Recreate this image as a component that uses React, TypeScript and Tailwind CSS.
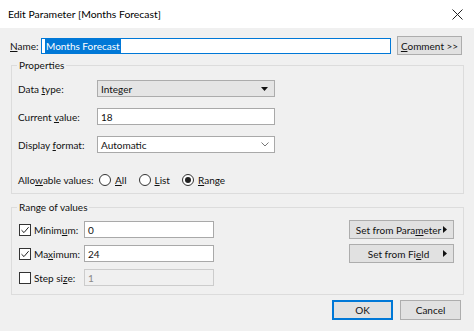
import React from 'react';

function U({ children }: { children: React.ReactNode }) {
  return <span className="underline underline-offset-[1px]">{children}</span>;
}

function Radio({ checked, children }: { checked?: boolean; children: React.ReactNode }) {
  return (
    <span className="flex items-center gap-[4px]">
      <span className="w-[12px] h-[12px] rounded-full border border-[#333333] bg-white flex items-center justify-center">
        {checked && <span className="w-[6px] h-[6px] rounded-full bg-[#222222]" />}
      </span>
      <span>{children}</span>
    </span>
  );
}

function Check({ checked }: { checked?: boolean }) {
  return (
    <span className="w-[12px] h-[12px] border border-[#333333] bg-white flex items-center justify-center shrink-0">
      {checked && (
        <svg width="10" height="10" viewBox="0 0 10 10">
          <path d="M1.5 5.2 L4 7.6 L8.6 2.2" fill="none" stroke="#222" strokeWidth="1" />
        </svg>
      )}
    </span>
  );
}

function Arrow() {
  return (
    <svg width="4" height="7" viewBox="0 0 4 7">
      <path d="M0 0 L4 3.5 L0 7 Z" fill="#111" />
    </svg>
  );
}

export default function App() {
  return (
    <div className="w-[474px] h-[331px] bg-[#f0f0f0] overflow-hidden whitespace-nowrap text-[10px] leading-[14px] text-[#111] font-['Lato',sans-serif]">
      <div className="h-[28px] bg-white flex items-center justify-between pl-[8px] pr-[11px]">
        <span className="text-[10.4px] text-black">Edit Parameter [Months Forecast]</span>
        <svg width="11" height="11" viewBox="0 0 11 11">
          <path d="M0.5 0.5 L10.5 10.5 M10.5 0.5 L0.5 10.5" stroke="#222" strokeWidth="1" />
        </svg>
      </div>

      <div className="flex items-center h-[19px] mt-[8px] pl-[10px]">
        <span className="w-[31px]"><U>N</U>ame:</span>
        <div className="w-[350px] h-[16px] border border-[#0078d7] bg-white flex items-center pl-[3px]">
          <span className="bg-[#0078d7] text-white px-[1px]">Months Forecast</span>
        </div>
        <button className="ml-[6px] w-[65px] h-[19px] bg-[#e1e1e1] border border-[#adadad] flex items-center justify-center">
          <span><U>C</U>omment &gt;&gt;</span>
        </button>
      </div>

      <fieldset className="mt-[3px] ml-[11px] w-[453px] border border-[#dcdcdc] px-[6px] pb-[5px]">
        <legend className="px-[2px] -ml-[1px]">Properties</legend>
        <div className="flex items-center mt-[8px]">
          <span className="w-[79px]">Data <U>t</U>ype:</span>
          <div className="w-[178px] h-[17px] bg-[#e5e5e5] border border-[#acacac] flex items-center justify-between pl-[3px] pr-[6px]">
            <span>Integer</span>
            <svg width="7" height="4" viewBox="0 0 7 4">
              <path d="M0 0 L7 0 L3.5 4 Z" fill="#111" />
            </svg>
          </div>
        </div>
        <div className="flex items-center mt-[11px]">
          <span className="w-[79px]">Current <U>v</U>alue:</span>
          <div className="w-[178px] h-[17px] bg-white border border-[#a9a9a9] flex items-center pl-[3px]">18</div>
        </div>
        <div className="flex items-center mt-[11px]">
          <span className="w-[79px]">Display <U>f</U>ormat:</span>
          <div className="w-[178px] h-[17px] bg-white border border-[#a9a9a9] flex items-center justify-between pl-[3px] pr-[5px]">
            <span>Automatic</span>
            <svg width="8" height="5" viewBox="0 0 8 5">
              <path d="M0.5 0.5 L4 4 L7.5 0.5" fill="none" stroke="#777" strokeWidth="1" />
            </svg>
          </div>
        </div>
        <div className="flex items-center mt-[18px] h-[17px]">
          <span className="w-[81px]">Allo<U>w</U>able values:</span>
          <div className="flex items-center gap-[12px]">
            <Radio><U>A</U>ll</Radio>
            <Radio><U>L</U>ist</Radio>
            <Radio checked><U>R</U>ange</Radio>
          </div>
        </div>
      </fieldset>

      <fieldset className="mt-[6px] ml-[11px] w-[453px] border border-[#dcdcdc] pl-[7px] pr-[9px] pb-[8px]">
        <legend className="px-[2px] -ml-[2px]">Range of values</legend>
        <div className="flex justify-between mt-[7px]">
          <div className="flex flex-col gap-[7px]">
            <div className="flex items-center h-[17px]">
              <Check checked />
              <span className="ml-[3px] w-[50px]">Minim<U>u</U>m:</span>
              <div className="w-[130px] h-[17px] bg-white border border-[#a9a9a9] flex items-center pl-[3px]">0</div>
            </div>
            <div className="flex items-center h-[17px]">
              <Check checked />
              <span className="ml-[3px] w-[50px]">Ma<U>x</U>imum:</span>
              <div className="w-[130px] h-[17px] bg-white border border-[#a9a9a9] flex items-center pl-[3px]">24</div>
            </div>
            <div className="flex items-center h-[17px]">
              <Check />
              <span className="ml-[3px] w-[50px]">Step si<U>z</U>e:</span>
              <div className="w-[130px] h-[17px] bg-[#f0f0f0] border border-[#cccccc] flex items-center pl-[3px] text-[#8a8a8a]">1</div>
            </div>
          </div>
          <div className="flex flex-col gap-[5px] -mt-[1px]">
            <button className="w-[105px] h-[19px] bg-[#e1e1e1] border border-[#adadad] flex items-center pl-[4px] pr-[6px] justify-between">
              <span className="flex-1 text-center">Set from Para<U>m</U>eter</span>
              <Arrow />
            </button>
            <button className="w-[105px] h-[19px] bg-[#e1e1e1] border border-[#adadad] flex items-center pl-[4px] pr-[6px] justify-between">
              <span className="flex-1 text-center">Set from Fi<U>e</U>ld</span>
              <Arrow />
            </button>
          </div>
        </div>
      </fieldset>

      <div className="flex justify-end gap-[7px] mt-[5px] pr-[13px]">
        <button className="w-[61px] h-[20px] bg-[#e1e1e1] border-2 border-[#0078d7] flex items-center justify-center">OK</button>
        <button className="w-[61px] h-[20px] bg-[#e1e1e1] border border-[#adadad] flex items-center justify-center">Cancel</button>
      </div>
    </div>
  );
}
